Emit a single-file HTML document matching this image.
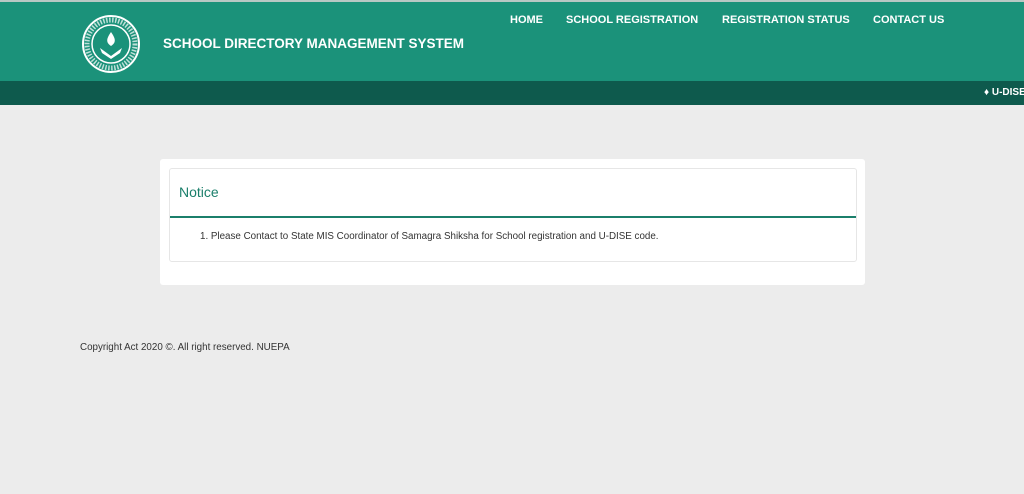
<!DOCTYPE html>
<html><head><meta charset="utf-8"><style>
body{margin:0;width:1024px;height:494px;background:#ececec;font-family:"Liberation Sans",sans-serif;overflow:hidden;position:relative}
.top{position:absolute;left:0;top:0;width:1024px;height:2px;background:#b8c8c4}
.hdr{position:absolute;left:0;top:2px;width:1024px;height:79px;background:#1b927a}
.band{position:absolute;left:0;top:81px;width:1024px;height:24px;background:#0e5a4d}
.title{position:absolute;left:163px;top:36px;color:#fff;font-weight:bold;font-size:13.5px}
.nav{position:absolute;top:14px;color:#fff;font-weight:bold;font-size:11px;letter-spacing:0}
.ticker{position:absolute;left:984px;top:87px;color:#fff;font-weight:bold;font-size:10px;white-space:nowrap}
.card{position:absolute;left:160px;top:159px;width:705px;height:126px;background:#fff;border-radius:3px}
.inner{position:absolute;left:169px;top:168px;width:686px;height:92px;border:1px solid #e6e6e6;border-radius:3px;background:#fff}
.nt{position:absolute;left:9px;top:15px;color:#1b7f6b;font-size:14px}
.ln{position:absolute;left:0;top:47px;width:686px;height:2px;background:#1b7f6b}
.tx{position:absolute;left:30px;top:62px;color:#333;font-size:9.8px}
.copy{position:absolute;left:80px;top:342px;color:#333;font-size:9.8px}
</style></head><body>
<div class="top"></div><div class="hdr"></div><div class="band"></div>
<svg style="position:absolute;left:80px;top:14px" width="62" height="60" viewBox="0 0 62 60">
<circle cx="31" cy="30" r="28" fill="none" stroke="#fff" stroke-width="2"/>
<circle cx="31" cy="30" r="19" fill="none" stroke="#fff" stroke-width="1.5"/>
<circle cx="31" cy="30" r="24" fill="none" stroke="#e8f4f0" stroke-width="5" stroke-dasharray="1.5 1.5" opacity=".8"/>
<path d="M31 18 C27 24 25 28 31 32 C37 28 35 24 31 18Z" fill="#fff"/>
<path d="M20 34 L31 42 L42 34 L40 39 L31 45 L22 39Z" fill="#fff"/>
</svg>
<div class="title">SCHOOL DIRECTORY MANAGEMENT SYSTEM</div>
<div class="nav" style="left:510px">HOME</div>
<div class="nav" style="left:566px">SCHOOL REGISTRATION</div>
<div class="nav" style="left:722px">REGISTRATION STATUS</div>
<div class="nav" style="left:873px">CONTACT US</div>
<div class="ticker">♦ U-DISE</div>
<div class="card"></div>
<div class="inner"><div class="nt">Notice</div><div class="ln"></div>
<div class="tx">1. Please Contact to State MIS Coordinator of Samagra Shiksha for School registration and U-DISE code.</div></div>
<div class="copy">Copyright Act 2020 ©. All right reserved. NUEPA</div>
</body></html>
